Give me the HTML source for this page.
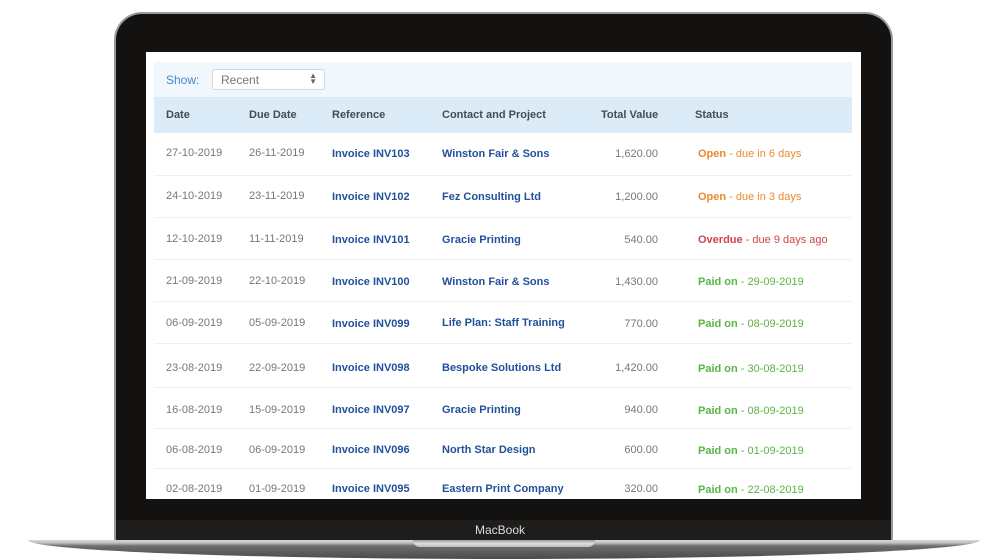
<!DOCTYPE html>
<html><head><meta charset="utf-8"><style>
*{margin:0;padding:0;box-sizing:border-box}
body{width:1000px;height:559px;background:#fff;position:relative;overflow:hidden;font-family:"Liberation Sans",sans-serif}
.frame{position:absolute;left:114px;top:12px;width:779px;height:535px;background:#141211;border:2px solid #9a9a9a;border-radius:28px 28px 0 0;border-bottom:none}
.lower{position:absolute;left:116px;top:520px;width:775px;height:22px;background:#1f1d1c}
.mb{position:absolute;left:0;width:1000px;top:523px;text-align:center;color:#ddd;font-size:12px}
.base{position:absolute;left:28px;top:540px;width:952px;height:19px;background:linear-gradient(#d9d9d9 0,#bdbdbd 3px,#6d6d6f 6px,#4a4a4c 19px);border-radius:0 0 50% 50%/0 0 100% 100%}
.notch{position:absolute;left:413px;top:540px;width:182px;height:7px;background:linear-gradient(#9a9a9a,#e0e0e0,#bbb);border-radius:0 0 8px 8px}
.screen{position:absolute;left:146px;top:52px;width:715px;height:447px;background:#fff;overflow:hidden}
.show{position:absolute;left:8px;top:10px;width:698px;height:35px;background:#f0f7fd}
.show span{position:absolute;left:12px;top:11px;color:#4a86c5;font-size:12px}
.sel{position:absolute;left:58px;top:7px;width:113px;height:21px;border:1px solid #cfd8e0;border-radius:3px;background:#fff;color:#777;font-size:12px;padding:3px 0 0 8px}
.sel i{position:absolute;right:7px;top:3px;font-style:normal;font-size:8px;line-height:6px;color:#666}
.head{position:absolute;left:8px;top:45px;width:698px;height:36px;background:#dcebf8}
.t{position:absolute;font-size:11px;white-space:nowrap}
.h{color:#444c55;font-weight:bold;top:57px}
.g{color:#777}
.b{color:#22509a;font-weight:bold}
.line{position:absolute;left:8px;width:698px;height:1px;background:#eef0f2}
.o{color:#ea8a2f}.r{color:#d0444a}.p{color:#5ab444}
</style></head><body>
<div class="frame"></div>
<div class="lower"></div>
<div class="mb">MacBook</div>
<div class="base"></div>
<div class="notch"></div>
<div class="screen">
<div class="show"><span>Show:</span><div class="sel">Recent<i>▲<br>▼</i></div></div>
<div class="head"></div>
<div class="t h" style="left:20px">Date</div>
<div class="t h" style="left:103px">Due Date</div>
<div class="t h" style="left:186px">Reference</div>
<div class="t h" style="left:296px">Contact and Project</div>
<div class="t h" style="left:455px">Total Value</div>
<div class="t h" style="left:549px">Status</div>
<div class="line" style="top:123px"></div>
<div class="line" style="top:165px"></div>
<div class="line" style="top:207px"></div>
<div class="line" style="top:249px"></div>
<div class="line" style="top:291px"></div>
<div class="line" style="top:335px"></div>
<div class="line" style="top:376px"></div>
<div class="line" style="top:416px"></div>

<div class="t g" style="left:20px;top:95px">27-10-2019</div><div class="t g" style="left:103px;top:95px">26-11-2019</div><div class="t b" style="left:186px;top:96px">Invoice INV103</div><div class="t b" style="left:296px;top:96px">Winston Fair &amp; Sons</div><div class="t g" style="right:203px;top:96px">1,620.00</div><div class="t o" style="left:552px;top:96px"><b>Open</b> - due in 6 days</div>

<div class="t g" style="left:20px;top:138px">24-10-2019</div><div class="t g" style="left:103px;top:138px">23-11-2019</div><div class="t b" style="left:186px;top:139px">Invoice INV102</div><div class="t b" style="left:296px;top:139px">Fez Consulting Ltd</div><div class="t g" style="right:203px;top:139px">1,200.00</div><div class="t o" style="left:552px;top:139px"><b>Open</b> - due in 3 days</div>

<div class="t g" style="left:20px;top:181px">12-10-2019</div><div class="t g" style="left:103px;top:181px">11-11-2019</div><div class="t b" style="left:186px;top:182px">Invoice INV101</div><div class="t b" style="left:296px;top:182px">Gracie Printing</div><div class="t g" style="right:203px;top:182px">540.00</div><div class="t r" style="left:552px;top:182px"><b>Overdue</b> - due 9 days ago</div>

<div class="t g" style="left:20px;top:223px">21-09-2019</div><div class="t g" style="left:103px;top:223px">22-10-2019</div><div class="t b" style="left:186px;top:224px">Invoice INV100</div><div class="t b" style="left:296px;top:224px">Winston Fair &amp; Sons</div><div class="t g" style="right:203px;top:224px">1,430.00</div><div class="t p" style="left:552px;top:224px"><b>Paid on</b> - 29-09-2019</div>

<div class="t g" style="left:20px;top:265px">06-09-2019</div><div class="t g" style="left:103px;top:265px">05-09-2019</div><div class="t b" style="left:186px;top:266px">Invoice INV099</div><div class="t b" style="left:296px;top:265px">Life Plan: Staff Training</div><div class="t g" style="right:203px;top:266px">770.00</div><div class="t p" style="left:552px;top:266px"><b>Paid on</b> - 08-09-2019</div>

<div class="t g" style="left:20px;top:310px">23-08-2019</div><div class="t g" style="left:103px;top:310px">22-09-2019</div><div class="t b" style="left:186px;top:310px">Invoice INV098</div><div class="t b" style="left:296px;top:310px">Bespoke Solutions Ltd</div><div class="t g" style="right:203px;top:310px">1,420.00</div><div class="t p" style="left:552px;top:311px"><b>Paid on</b> - 30-08-2019</div>

<div class="t g" style="left:20px;top:352px">16-08-2019</div><div class="t g" style="left:103px;top:352px">15-09-2019</div><div class="t b" style="left:186px;top:352px">Invoice INV097</div><div class="t b" style="left:296px;top:352px">Gracie Printing</div><div class="t g" style="right:203px;top:352px">940.00</div><div class="t p" style="left:552px;top:353px"><b>Paid on</b> - 08-09-2019</div>

<div class="t g" style="left:20px;top:392px">06-08-2019</div><div class="t g" style="left:103px;top:392px">06-09-2019</div><div class="t b" style="left:186px;top:392px">Invoice INV096</div><div class="t b" style="left:296px;top:392px">North Star Design</div><div class="t g" style="right:203px;top:392px">600.00</div><div class="t p" style="left:552px;top:393px"><b>Paid on</b> - 01-09-2019</div>

<div class="t g" style="left:20px;top:431px">02-08-2019</div><div class="t g" style="left:103px;top:431px">01-09-2019</div><div class="t b" style="left:186px;top:431px">Invoice INV095</div><div class="t b" style="left:296px;top:431px">Eastern Print Company</div><div class="t g" style="right:203px;top:431px">320.00</div><div class="t p" style="left:552px;top:432px"><b>Paid on</b> - 22-08-2019</div>
</div>
</body></html>
